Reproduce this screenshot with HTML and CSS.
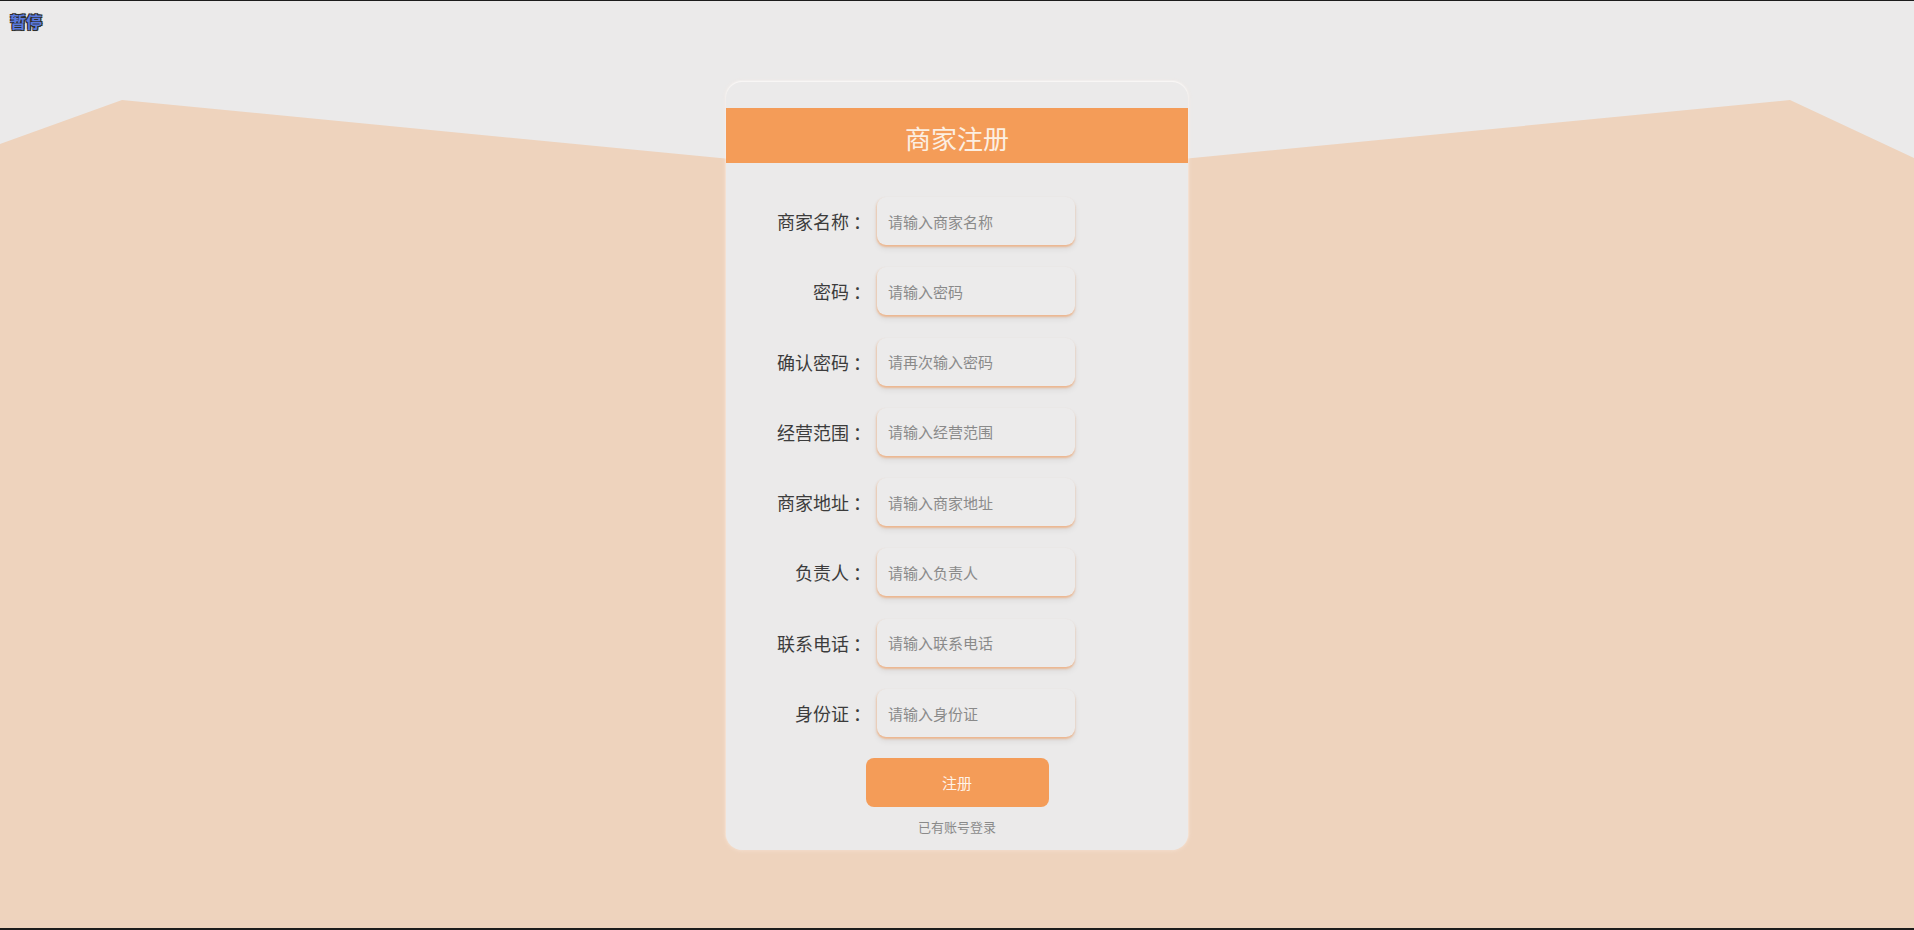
FILE: index.html
```html
<!DOCTYPE html>
<html lang="zh-CN">
<head>
<meta charset="utf-8">
<title>商家注册</title>
<link rel="stylesheet" href="styles.css">
</head>
<body>
<div class="page">
  <div class="pause-tag">暂停</div>
  <div class="card">
    <div class="card-header">商家注册</div>
    <form class="form">
      <div class="row"><label class="label">商家名称<span class="colon">：</span></label><input class="field" type="text" placeholder="请输入商家名称"></div>
      <div class="row"><label class="label">密码<span class="colon">：</span></label><input class="field" type="password" placeholder="请输入密码"></div>
      <div class="row"><label class="label">确认密码<span class="colon">：</span></label><input class="field" type="password" placeholder="请再次输入密码"></div>
      <div class="row"><label class="label">经营范围<span class="colon">：</span></label><input class="field" type="text" placeholder="请输入经营范围"></div>
      <div class="row"><label class="label">商家地址<span class="colon">：</span></label><input class="field" type="text" placeholder="请输入商家地址"></div>
      <div class="row"><label class="label">负责人<span class="colon">：</span></label><input class="field" type="text" placeholder="请输入负责人"></div>
      <div class="row"><label class="label">联系电话<span class="colon">：</span></label><input class="field" type="text" placeholder="请输入联系电话"></div>
      <div class="row"><label class="label">身份证<span class="colon">：</span></label><input class="field" type="text" placeholder="请输入身份证"></div>
      <button class="submit" type="button">注册</button>
      <a class="login-link">已有账号登录</a>
    </form>
  </div>
</div>
</body>
</html>
```
FILE: styles.css
```css
* { box-sizing: border-box; }
html, body { margin: 0; padding: 0; }
body {
  font-family: "Noto Sans CJK SC", "Noto Sans", sans-serif;
  background: #ebeaea;
}
.page {
  position: relative;
  height: 930px;
  background: #ebeaea;
  border-top: 1px solid #1c1c1c;
  border-bottom: 2px solid #1c1c1c;
  overflow: hidden;
}
.page::before {
  content: "";
  position: absolute;
  inset: 0;
  background: #eed3bd;
  clip-path: polygon(0 143px, 122px 99px, 957px 180px, 1790px 99px, 1914px 157px, 1914px 100%, 0 100%);
  z-index: 0;
}
.pause-tag {
  position: absolute;
  left: 10px;
  top: 8px;
  z-index: 2;
  font-size: 16px;
  font-weight: bold;
  color: #5a79de;
  text-shadow: -1px -1px 0 #2e2e2e, 1px -1px 0 #2e2e2e, -1px 1px 0 #2e2e2e, 1px 1px 0 #2e2e2e, 0 0 2px #2e2e2e;
}
.card {
  position: relative;
  z-index: 1;
  width: 462px;
  margin: 81px auto 0;
  padding: 26px 0 14px;
  background: #ebeaea;
  border-radius: 16px;
  box-shadow: 0 -1px 2px rgba(255, 255, 255, 0.8), 0 0 5px rgba(255, 238, 226, 0.6), 0 0 1px rgba(0, 0, 0, 0.04);
}
.card-header {
  height: 55px;
  padding-top: 4px;
  display: flex;
  align-items: center;
  justify-content: center;
  background: #f49c58;
  color: #fcefe2;
  font-size: 26px;
}
.form {
  display: flex;
  flex-direction: column;
  margin-top: 34px;
}
.row {
  display: flex;
  align-items: center;
  height: 48px;
  margin-bottom: 22.3px;
  padding-left: 21px;
}
.label {
  width: 120px;
  text-align: right;
  font-size: 18px;
  color: #3c3c3c;
  margin-right: 10px;
}
.colon {
  display: inline-block;
  width: 18px;
  text-align: center;
  padding-left: 4px;
}
.field {
  width: 198px;
  height: 48px;
  border: none;
  outline: none;
  border-radius: 9px;
  background: #ecebeb;
  padding: 0 0 0 11px;
  font-family: inherit;
  font-size: 15px;
  color: #444;
  box-shadow: 0 2px 2px rgba(244, 160, 100, 0.55), -1px 1px 2px rgba(244, 180, 130, 0.35), 0 4px 6px rgba(0, 0, 0, 0.07);
}
.field::placeholder { color: #8a8a8a; }
.submit {
  align-self: center;
  width: 183px;
  height: 49px;
  margin-top: -1px;
  border: none;
  border-radius: 8px;
  background: #f49c58;
  color: #fff3e8;
  font-family: inherit;
  font-size: 15px;
}
.login-link {
  align-self: center;
  margin-top: 11px;
  font-size: 13px;
  line-height: 18px;
  color: #8a8a8a;
}
```
